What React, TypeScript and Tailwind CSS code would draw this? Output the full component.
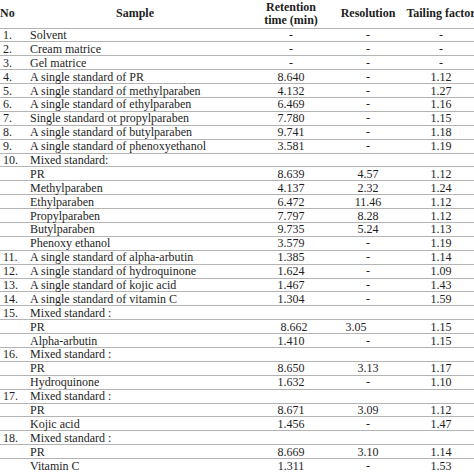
import React from "react";

type Row = { no?: string; s: string; rt?: string; res?: string; tf?: string; resCls?: string; rtCls?: string };

const rows: Row[] = [
  { no: "1.", s: "Solvent", rt: "-", res: "-", tf: "-" },
  { no: "2.", s: "Cream matrice", rt: "-", res: "-", tf: "-" },
  { no: "3.", s: "Gel matrice", rt: "-", res: "-", tf: "-" },
  { no: "4.", s: "A single standard of PR", rt: "8.640", res: "-", tf: "1.12" },
  { no: "5.", s: "A single standard of methylparaben", rt: "4.132", res: "-", tf: "1.27" },
  { no: "6.", s: "A single standard of ethylparaben", rt: "6.469", res: "-", tf: "1.16" },
  { no: "7.", s: "Single standard ot propylparaben", rt: "7.780", res: "-", tf: "1.15" },
  { no: "8.", s: "A single standard of butylparaben", rt: "9.741", res: "-", tf: "1.18" },
  { no: "9.", s: "A single standard of phenoxyethanol", rt: "3.581", res: "-", tf: "1.19" },
  { no: "10.", s: "Mixed standard:" },
  { s: "PR", rt: "8.639", res: "4.57", tf: "1.12" },
  { s: "Methylparaben", rt: "4.137", res: "2.32", tf: "1.24" },
  { s: "Ethylparaben", rt: "6.472", res: "11.46", tf: "1.12" },
  { s: "Propylparaben", rt: "7.797", res: "8.28", tf: "1.12" },
  { s: "Butylparaben", rt: "9.735", res: "5.24", tf: "1.13" },
  { s: "Phenoxy ethanol", rt: "3.579", res: "-", tf: "1.19" },
  { no: "11.", s: "A single standard of alpha-arbutin", rt: "1.385", res: "-", tf: "1.14" },
  { no: "12.", s: "A single standard of hydroquinone", rt: "1.624", res: "-", tf: "1.09" },
  { no: "13.", s: "A single standard of kojic acid", rt: "1.467", res: "-", tf: "1.43" },
  { no: "14.", s: "A single standard of vitamin C", rt: "1.304", res: "-", tf: "1.59" },
  { no: "15.", s: "Mixed standard :" },
  { s: "PR", rt: "8.662", res: "3.05", tf: "1.15", resCls: "pr-[24px]", rtCls: "pl-[6px]" },
  { s: "Alpha-arbutin", rt: "1.410", res: "-", tf: "1.15" },
  { no: "16.", s: "Mixed standard :" },
  { s: "PR", rt: "8.650", res: "3.13", tf: "1.17" },
  { s: "Hydroquinone", rt: "1.632", res: "-", tf: "1.10" },
  { no: "17.", s: "Mixed standard :" },
  { s: "PR", rt: "8.671", res: "3.09", tf: "1.12" },
  { s: "Kojic acid", rt: "1.456", res: "-", tf: "1.47" },
  { no: "18.", s: "Mixed standard :" },
  { s: "PR", rt: "8.669", res: "3.10", tf: "1.14" },
  { s: "Vitamin C", rt: "1.311", res: "-", tf: "1.53" },
];

const grid = "grid grid-cols-[30px_215px_92px_62px_84px] w-[483px]";

export default function App() {
  return (
    <div
      className="w-[474px] h-[474px] overflow-hidden bg-white text-[#1e1e1e] text-[12px]"
      style={{ fontFamily: '"Liberation Serif", "Times New Roman", serif' }}
    >
      <div className={`${grid} h-[27.5px] items-center font-bold leading-[13px]`}>
        <div className="pl-0">No</div>
        <div className="text-center pr-[5px]">Sample</div>
        <div className="text-center">
          Retention
          <br />
          time (min)
        </div>
        <div className="text-center">Resolution</div>
        <div className="text-center whitespace-nowrap">Tailing factor</div>
      </div>
      {rows.map((r, i) => (
        <div
          key={i}
          className={`${grid} h-[13.9px] border-t-[1.6px] border-[#b4b4b4] items-center leading-[12px]`}
        >
          <div className="pl-[3px]">{r.no ?? ""}</div>
          <div className="whitespace-nowrap">{r.s}</div>
          <div className={`text-center ${r.rtCls ?? ""}`}>{r.rt ?? ""}</div>
          <div className={`text-center ${r.resCls ?? ""}`}>{r.res ?? ""}</div>
          <div className="text-center">{r.tf ?? ""}</div>
        </div>
      ))}
    </div>
  );
}
